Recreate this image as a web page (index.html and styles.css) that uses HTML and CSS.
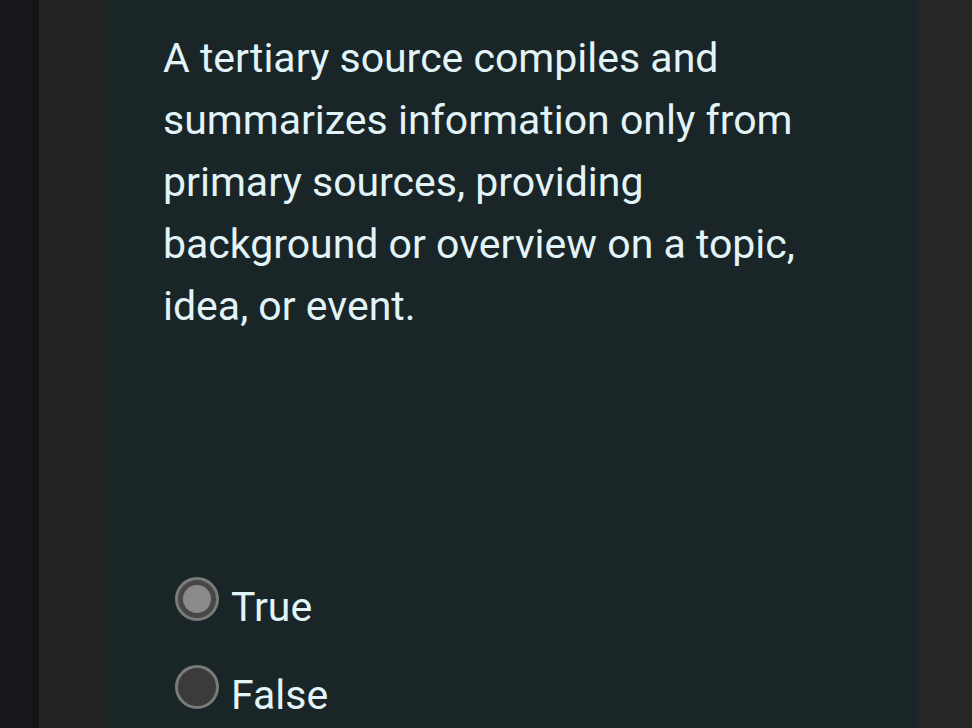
FILE: index.html
```html
<!DOCTYPE html>
<html>
<head>
<meta charset="utf-8">
<link rel="stylesheet" href="styles.css">
</head>
<body>
<div class="page">
  <div class="edge"></div>
  <div class="edge2"></div>
  <div class="gutter"></div>
  <main class="card">
    <p class="question">A tertiary source compiles and summarizes information only from primary sources, providing background or overview on a topic, idea, or event.</p>
    <div class="options">
      <label class="option"><span class="radio checked"><span class="dot"></span></span><span class="label">True</span></label>
      <label class="option"><span class="radio"></span><span class="label">False</span></label>
    </div>
  </main>
  <div class="right"></div>
</div>
</body>
</html>
```

FILE: styles.css
```css
html, body {
  margin: 0;
  padding: 0;
  height: 100%;
  overflow: hidden;
  background: #17181b;
}
.page {
  display: flex;
  height: 728px;
  width: 972px;
}
.edge { width: 32px; background: #17181b; }
.edge2 { width: 7px; background: #141518; }
.gutter { width: 68px; background: #232323; }
.right { flex: 1; background: #262626; }
.card {
  width: 810px;
  background: #1a2528;
  padding: 27px 0 0 56px;
  box-sizing: border-box;
  font-family: Roboto, "Liberation Sans", sans-serif;
  color: #e2f4f8;
}
.question {
  margin: 0;
  font-size: 41px;
  line-height: 62px;
  width: 660px;
}
.options {
  margin-top: 240px;
  display: flex;
  flex-direction: column;
  gap: 44px;
}
.option {
  display: flex;
  align-items: center;
  gap: 12px;
  margin-left: 12px;
  height: 44px;
}
.radio {
  width: 44px;
  height: 44px;
  box-sizing: border-box;
  border-radius: 50%;
  border: 3px solid #7a7a7a;
  background: #3b3b3b;
  display: flex;
  align-items: center;
  justify-content: center;
}
.radio.checked { background: #474747; }
.dot {
  width: 28px;
  height: 28px;
  border-radius: 50%;
  background: #8a8a8a;
}
.label {
  font-size: 41px;
  line-height: 44px;
  position: relative;
  top: 8px;
}
```
